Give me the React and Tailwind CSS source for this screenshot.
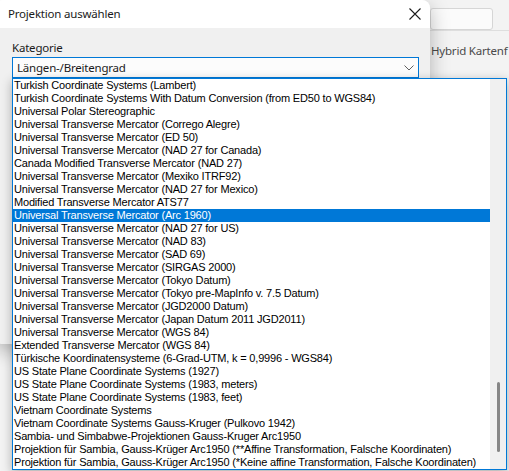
import React from 'react';

const items = [
    'Turkish Coordinate Systems (Lambert)',
    'Turkish Coordinate Systems With Datum Conversion (from ED50 to WGS84)',
    'Universal Polar Stereographic',
    'Universal Transverse Mercator (Corrego Alegre)',
    'Universal Transverse Mercator (ED 50)',
    'Universal Transverse Mercator (NAD 27 for Canada)',
    'Canada Modified Transverse Mercator (NAD 27)',
    'Universal Transverse Mercator (Mexiko ITRF92)',
    'Universal Transverse Mercator (NAD 27 for Mexico)',
    'Modified Transverse Mercator ATS77',
    'Universal Transverse Mercator (Arc 1960)',
    'Universal Transverse Mercator (NAD 27 for US)',
    'Universal Transverse Mercator (NAD 83)',
    'Universal Transverse Mercator (SAD 69)',
    'Universal Transverse Mercator (SIRGAS 2000)',
    'Universal Transverse Mercator (Tokyo Datum)',
    'Universal Transverse Mercator (Tokyo pre-MapInfo v. 7.5 Datum)',
    'Universal Transverse Mercator (JGD2000 Datum)',
    'Universal Transverse Mercator (Japan Datum 2011 JGD2011)',
    'Universal Transverse Mercator (WGS 84)',
    'Extended Transverse Mercator (WGS 84)',
    'Türkische Koordinatensysteme (6-Grad-UTM, k = 0,9996 - WGS84)',
    'US State Plane Coordinate Systems (1927)',
    'US State Plane Coordinate Systems (1983, meters)',
    'US State Plane Coordinate Systems (1983, feet)',
    'Vietnam Coordinate Systems',
    'Vietnam Coordinate Systems Gauss-Kruger (Pulkovo 1942)',
    'Sambia- und Simbabwe-Projektionen Gauss-Kruger Arc1950',
    'Projektion für Sambia, Gauss-Krüger Arc1950 (**Affine Transformation, Falsche Koordinaten)',
    'Projektion für Sambia, Gauss-Krüger Arc1950 (*Keine affine Transformation, Falsche Koordinaten)',
];

const selected = 10;

function CloseIcon() {
    return (
        <svg width="12" height="12" viewBox="0 0 12 12" fill="none" stroke="#1b1b1b" strokeWidth="1.1">
            <path d="M0.5 0.5 L11.5 11.5 M11.5 0.5 L0.5 11.5" />
        </svg>
    );
}

function Chevron() {
    return (
        <svg width="10" height="6" viewBox="0 0 10 6" fill="none" stroke="#606060" strokeWidth="1">
            <path d="M0.5 0.5 L5 5 L9.5 0.5" />
        </svg>
    );
}

export default function App() {
    return (
        <div className="relative h-[471px] w-[509px] overflow-hidden bg-[#f3f3f3] font-['Noto_Sans',sans-serif] text-[#1a1a1a]">
            {/* window behind the dialog */}
            <div className="flex flex-col pl-[430px]">
                <div className="h-[31px] border-b border-[#dedede] pt-[8px]">
                    <div className="h-[22px] w-[63px] rounded-[3px] border border-[#d6d6d6] bg-[#fbfbfb]" />
                </div>
                <div className="whitespace-nowrap pl-[1px] pt-[12px] text-[11.5px] leading-[16px] tracking-[-0.2px] text-[#4a4a4a]">
                    Hybrid Kartenf
                </div>
            </div>

            {/* dialog */}
            <div className="absolute left-[-6px] top-0 h-[344px] w-[436px] overflow-hidden rounded-lg bg-[#f0f0f0] shadow-[0_6px_20px_rgba(0,0,0,0.28)]">
                <div className="flex h-[28px] items-center justify-between bg-white pb-[1px] pl-[14px] pr-[9px]">
                    <span className="text-[11.5px] leading-[16px] tracking-[-0.2px]">Projektion auswählen</span>
                    <CloseIcon />
                </div>
                <div className="px-[18px] pt-[12px]">
                    <div className="text-[11.5px] leading-[16px] tracking-[-0.2px]">Kategorie</div>
                    <div className="mt-[1px] flex h-[21px] w-[407px] items-center justify-between border border-[#0078d7] bg-[#fcfcfc] pl-[4px] pr-[4px]">
                        <span className="text-[11.5px] leading-[16px] tracking-[-0.2px]">Längen-/Breitengrad</span>
                        <Chevron />
                    </div>
                </div>
            </div>

            {/* open dropdown list */}
            <div className="absolute left-[12px] top-[78px] flex h-[392px] w-[495px] border border-[#0078d7] bg-white shadow-[0_3px_10px_rgba(0,0,0,0.3)]">
                <div className="flex min-w-0 flex-1 flex-col font-['Liberation_Sans',sans-serif] text-[11px] tracking-[-0.18px] text-black">
                    {items.map((item, i) => (
                        <div
                            key={i}
                            className={
                                i === selected
                                    ? 'h-[13px] whitespace-nowrap bg-[#0078d7] pl-[1px] leading-[13px] text-white'
                                    : 'h-[13px] whitespace-nowrap pl-[1px] leading-[13px]'
                            }
                        >
                            {item}
                        </div>
                    ))}
                </div>
                <div className="flex w-[16px] flex-col items-center justify-end bg-[#f0f0f0] pb-[17px]">
                    <div className="h-[70px] w-[3px] rounded-full bg-[#868686]" />
                </div>
            </div>
        </div>
    );
}
